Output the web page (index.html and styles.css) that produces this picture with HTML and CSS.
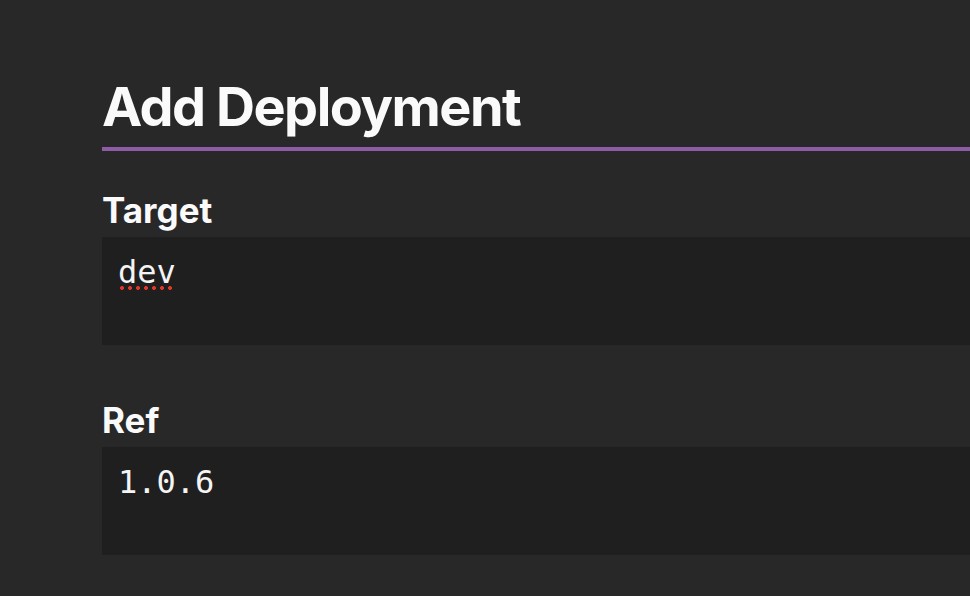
FILE: index.html
```html
<!DOCTYPE html>
<html lang="en">
<head>
<meta charset="utf-8">
<title>Add Deployment</title>
<link rel="stylesheet" href="styles.css">
</head>
<body>
<main class="page">
  <h1 class="title">Add Deployment</h1>
  <section class="form">
    <div class="field">
      <label class="label">Target</label>
      <div class="input"><span class="misspelled">dev</span></div>
    </div>
    <div class="field">
      <label class="label">Ref</label>
      <div class="input">1.0.6</div>
    </div>
  </section>
</main>
</body>
</html>
```

FILE: styles.css
```css
html, body {
  margin: 0;
  padding: 0;
  background: #282828;
  overflow: hidden;
}

body {
  color: #fafafa;
  font-family: Inter, "Noto Sans", sans-serif;
}

.page {
  margin-left: 102px;
  margin-right: -60px;
  padding-top: 75px;
}

.title {
  margin: 0;
  font-size: 54px;
  line-height: 64px;
  font-weight: 700;
  letter-spacing: -1.5px;
  padding-bottom: 8px;
  border-bottom: 4px solid #8e5ca6;
}

.form {
  display: flex;
  flex-direction: column;
  gap: 55px;
  padding-top: 39px;
}

.field {
  display: flex;
  flex-direction: column;
  gap: 7px;
}

.label {
  font-size: 35px;
  line-height: 40px;
  font-weight: 700;
  letter-spacing: 0;
}

.input {
  box-sizing: border-box;
  height: 108px;
  padding: 16px;
  background: #1f1f1f;
  font-family: "DejaVu Sans Mono", "Liberation Mono", monospace;
  font-size: 32px;
  color: #f4f4f4;
}

.misspelled {
  background-image: radial-gradient(circle, #e0372c 1.8px, transparent 2.2px);
  background-size: 8px 6px;
  background-repeat: repeat-x;
  background-position: 0 100%;
}
```
